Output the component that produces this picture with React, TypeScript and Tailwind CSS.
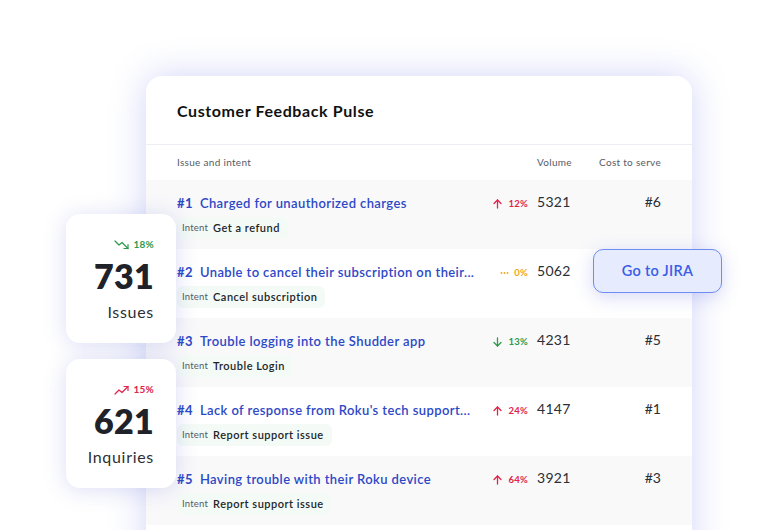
import React from "react";

const rows = [
  { n: "#1", title: "Charged for unauthorized charges", intent: "Get a refund", trend: "up", pct: "12%", vol: "5321", cost: "#6" },
  { n: "#2", title: "Unable to cancel their subscription on their...", intent: "Cancel subscription", trend: "flat", pct: "0%", vol: "5062", cost: "" },
  { n: "#3", title: "Trouble logging into the Shudder app", intent: "Trouble Login", trend: "down", pct: "13%", vol: "4231", cost: "#5" },
  { n: "#4", title: "Lack of response from Roku's tech support...", intent: "Report support issue", trend: "up", pct: "24%", vol: "4147", cost: "#1" },
  { n: "#5", title: "Having trouble with their Roku device", intent: "Report support issue", trend: "up", pct: "64%", vol: "3921", cost: "#3" },
];

function Arrow({ dir }: { dir: string }) {
  if (dir === "flat") {
    return (
      <svg width="9" height="8" viewBox="0 0 9 8" className="mr-[5px]">
        <circle cx="1.5" cy="4" r="0.9" fill="#f2a516" />
        <circle cx="4.5" cy="4" r="0.9" fill="#f2a516" />
        <circle cx="7.5" cy="4" r="0.9" fill="#f2a516" />
      </svg>
    );
  }
  const color = dir === "up" ? "#e0244a" : "#2e9a4c";
  return (
    <svg width="9" height="10" viewBox="0 0 9 10" className="mr-[7px]" fill="none" stroke={color} strokeWidth="1.3" strokeLinecap="round" strokeLinejoin="round">
      {dir === "up" ? (
        <>
          <path d="M4.5 9V1" />
          <path d="M1 4.5L4.5 1L8 4.5" />
        </>
      ) : (
        <>
          <path d="M4.5 1V9" />
          <path d="M1 5.5L4.5 9L8 5.5" />
        </>
      )}
    </svg>
  );
}

function StatCard({ pct, up, num, label }: { pct: string; up: boolean; num: string; label: string }) {
  const color = up ? "text-[#e0244a]" : "text-[#2e9a4c]";
  return (
    <div className="w-[110px] h-[129px] rounded-[14px] bg-white shadow-[0_2px_22px_rgba(90,100,210,0.22)] flex flex-col items-end pr-[22px] pt-[23px]">
      <div className={`flex items-center text-[10px] font-bold tracking-[0.2px] ${color}`}>
        <svg width="16" height="10" viewBox="0 0 16 10" fill="none" stroke="currentColor" strokeWidth="1.2" strokeLinecap="round" strokeLinejoin="round" className="mr-[4px]">
          {up ? (
            <>
              <path d="M1 9L5 5L8 7.5L14 1.5" />
              <path d="M10 1.5H14V5.5" />
            </>
          ) : (
            <>
              <path d="M1 1L5 5L8 2.5L14 8.5" />
              <path d="M10 8.5H14V4.5" />
            </>
          )}
        </svg>
        {pct}
      </div>
      <div className="text-[34px] leading-[40px] font-extrabold text-[#1f2229] mt-[4px] tracking-[0.3px]">{num}</div>
      <div className="text-[16px] leading-[20px] text-[#2c2f36] mt-[6px] tracking-[0.7px]">{label}</div>
    </div>
  );
}

export default function App() {
  return (
    <div className="relative w-[764px] h-[530px] overflow-hidden bg-white" style={{ fontFamily: "Lato, 'Open Sans', sans-serif" }}>
      <div className="absolute left-[146px] top-[76px] w-[546px] h-[500px] rounded-[16px] bg-white shadow-[0_0_36px_rgba(90,105,225,0.28)] overflow-hidden">
        <div className="h-[69px] flex items-center pl-[31px] border-b border-[#eceef3]">
          <div className="text-[16px] font-bold text-[#111] tracking-[0.6px] mt-[2px]">Customer Feedback Pulse</div>
        </div>
        <div className="h-[35px] flex items-center px-[31px] text-[10px] text-[#555a66] tracking-[0.3px]">
          <div className="flex-1">Issue and intent</div>
          <div className="w-[34px]">Volume</div>
          <div className="w-[90px] text-right">Cost to serve</div>
        </div>
        {rows.map((r, i) => (
          <div key={i} className={`h-[69px] px-[31px] pt-[15px] ${i % 2 === 0 ? "bg-[#f9f9fa]" : "bg-white"}`}>
            <div className="flex items-center h-[18px]">
              <div className="flex-1 flex text-[13px] font-semibold text-[#2d48c6] whitespace-nowrap tracking-[0.4px]">
                <span className="mr-[7px] font-bold">{r.n}</span>
                <span>{r.title}</span>
              </div>
              <div className={`flex items-center text-[9.5px] font-bold tracking-[0.2px] ${r.trend === "up" ? "text-[#e0244a]" : r.trend === "down" ? "text-[#2e9a4c]" : "text-[#f2a516]"}`}>
                <Arrow dir={r.trend} />
                {r.pct}
              </div>
              <div className="w-[34px] ml-[9px] text-[14px] leading-[18px] pb-[4px] text-[#2b2e35] tracking-[0.3px]">{r.vol}</div>
              <div className="w-[90px] text-right text-[14px] leading-[18px] pb-[4px] text-[#2b2e35]">{r.cost}</div>
            </div>
            <div className="mt-[3px] inline-flex items-center h-[22px] pl-[5px] pr-[8px] rounded-[6px] bg-[#f4fbf6]">
              <span className="text-[9.5px] text-[#555a66] mr-[5px] tracking-[0.2px]">Intent</span>
              <span className="text-[11px] font-semibold text-[#22252b] tracking-[0.5px]">{r.intent}</span>
            </div>
          </div>
        ))}
        <div className="h-[40px] bg-white" />
      </div>

      <div className="absolute left-[66px] top-[214px]">
        <StatCard pct="18%" up={false} num="731" label="Issues" />
      </div>
      <div className="absolute left-[66px] top-[359px]">
        <StatCard pct="15%" up={true} num="621" label="Inquiries" />
      </div>

      <div className="absolute left-[593px] top-[249px] w-[129px] h-[44px] rounded-[10px] border border-[#6f8df0] bg-[#e6ecfd] shadow-[0_4px_18px_rgba(90,105,225,0.25)] flex items-center justify-center text-[14.5px] font-semibold text-[#3a5de6] tracking-[0.3px]">
        Go to JIRA
      </div>
    </div>
  );
}
